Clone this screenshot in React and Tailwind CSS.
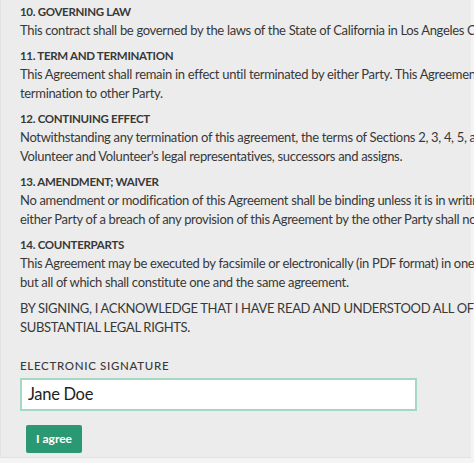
import React from "react";

const sections = [
  {
    h: "10. GOVERNING LAW",
    lines: [
      "This contract shall be governed by the laws of the State of California in Los Angeles County, California.",
    ],
  },
  {
    h: "11. TERM AND TERMINATION",
    lines: [
      "This Agreement shall remain in effect until terminated by either Party. This Agreement may be terminated by either Party upon written notice of",
      "termination to other Party.",
    ],
  },
  {
    h: "12. CONTINUING EFFECT",
    lines: [
      "Notwithstanding any termination of this agreement, the terms of Sections 2, 3, 4, 5, and 9 shall survive and shall be binding upon",
      "Volunteer and Volunteer\u2019s legal representatives, successors and assigns.",
    ],
  },
  {
    h: "13. AMENDMENT; WAIVER",
    lines: [
      "No amendment or modification of this Agreement shall be binding unless it is in writing and signed by both Parties. No waiver by",
      "either Party of a breach of any provision of this Agreement by the other Party shall not operate as a waiver of any subsequent breach.",
    ],
  },
  {
    h: "14. COUNTERPARTS",
    lines: [
      "This Agreement may be executed by facsimile or electronically (in PDF format) in one or more counterparts, each of which shall be an original,",
      "but all of which shall constitute one and the same agreement.",
    ],
  },
];

export default function App() {
  return (
    <div
      className="w-[474px] h-[463px] overflow-hidden bg-[#f4f4f4] text-[#383838]"
      style={{ fontFamily: "Lato, 'Open Sans', sans-serif" }}
    >
      <div className="w-[471px] h-[458px] bg-[#ececec] border-l border-b border-[#e2e2e2] pl-[19px] pt-[2px]">
        {sections.map((s) => (
          <div key={s.h} className="mb-[6px]">
            <div className="text-[11.5px] font-bold leading-[19px] tracking-[-0.3px] whitespace-nowrap">{s.h}</div>
            {s.lines.map((l) => (
              <div key={l} className="text-[13px] leading-[19px] tracking-[-0.32px] whitespace-nowrap">
                {l}
              </div>
            ))}
          </div>
        ))}
        <div className="mt-[7px] text-[13px] leading-[19px] tracking-[-0.32px] whitespace-nowrap">
          <div>
            BY SIGNING, I ACKNOWLEDGE THAT I HAVE READ AND UNDERSTOOD ALL OF THE TERMS OF THIS AGREEMENT AND THAT I AM GIVING UP
          </div>
          <div>SUBSTANTIAL LEGAL RIGHTS.</div>
        </div>
        <div className="mt-[21px] text-[11.5px] font-medium tracking-[0.06em] leading-[16px] text-[#3a3a3a]">
          ELECTRONIC SIGNATURE
        </div>
        <div className="mt-[4px] w-[397px] h-[33px] bg-white border-2 border-[#a5d8c3] flex items-center pl-[6px] text-[16.5px] tracking-[-0.3px] text-[#222222]">
          Jane Doe
        </div>
        <button className="mt-[14px] ml-[6px] w-[56px] h-[28px] bg-[#2a9872] text-white text-[12px] font-bold rounded-[2px] flex items-center justify-center">
          I agree
        </button>
      </div>
    </div>
  );
}
